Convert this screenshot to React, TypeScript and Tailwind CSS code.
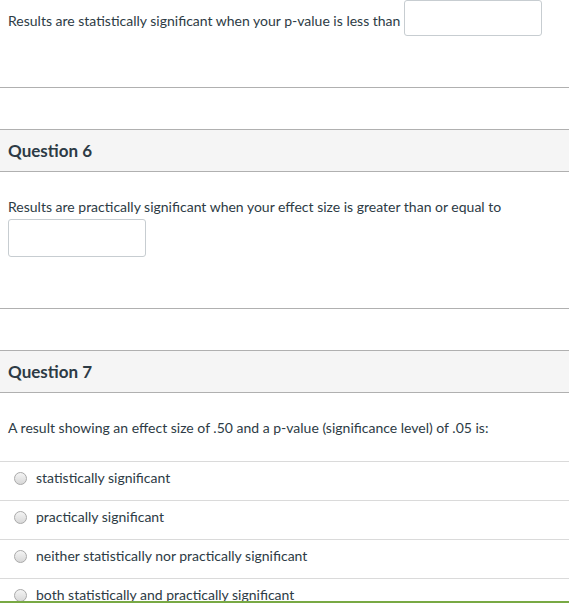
import React from 'react';

const options = [
    'statistically significant',
    'practically significant',
    'neither statistically nor practically significant',
    'both statistically and practically significant',
];

function Radio() {
    return (
        <span className="w-[13px] h-[13px] rounded-full border border-[#a9a9a9] bg-gradient-to-b from-[#f4f4f4] to-[#d8d8d8] shrink-0" />
    );
}

function QuestionHeader({ label }: { label: string }) {
    return (
        <div className="h-[43px] border-y border-[#b0b0b0] bg-[#f5f5f5] flex items-center px-2">
            <h2 className="text-[17px] font-bold text-[#2d3b45] leading-none">{label}</h2>
        </div>
    );
}

export default function App() {
    return (
        <div className="w-[569px] h-[603px] flex flex-col bg-white text-[#2d3b45] text-[14px] font-['Lato','Liberation_Sans',sans-serif]">
            <div className="flex-1 overflow-hidden">
                {/* Question 5 (tail) */}
                <div className="h-[88px] border-b border-[#b0b0b0]">
                    <div className="flex items-start pl-2">
                        <p className="pt-[11px] leading-[20px]">Results are statistically significant when your p-value is less than</p>
                        <input
                            type="text"
                            className="ml-[4px] w-[138px] h-[36px] border border-[#c7cdd1] rounded-[3px] bg-white"
                        />
                    </div>
                </div>

                <div className="h-[41px]" />

                {/* Question 6 */}
                <QuestionHeader label="Question 6" />
                <div className="h-[137px] border-b border-[#b0b0b0] px-2 pt-[25px]">
                    <p className="leading-[20px]">Results are practically significant when your effect size is greater than or equal to</p>
                    <input
                        type="text"
                        className="mt-[2px] w-[138px] h-[38px] border border-[#c7cdd1] rounded-[3px] bg-white block"
                    />
                </div>

                <div className="h-[41px]" />

                {/* Question 7 */}
                <QuestionHeader label="Question 7" />
                <div className="px-2 pt-[25px] h-[68px]">
                    <p className="leading-[20px]">A result showing an effect size of .50 and a p-value (significance level) of .05 is:</p>
                </div>
                <div className="border-t border-[#dadada]">
                    {options.map((opt) => (
                        <div
                            key={opt}
                            className="h-[39px] pt-[6px] pl-[14px] border-b border-[#dadada]"
                        >
                            <label className="flex items-center gap-[9px] h-[20px]">
                                <Radio />
                                <span className="leading-[20px]">{opt}</span>
                            </label>
                        </div>
                    ))}
                </div>
            </div>
            <div className="h-[2px] bg-[#78a944]" />
        </div>
    );
}
